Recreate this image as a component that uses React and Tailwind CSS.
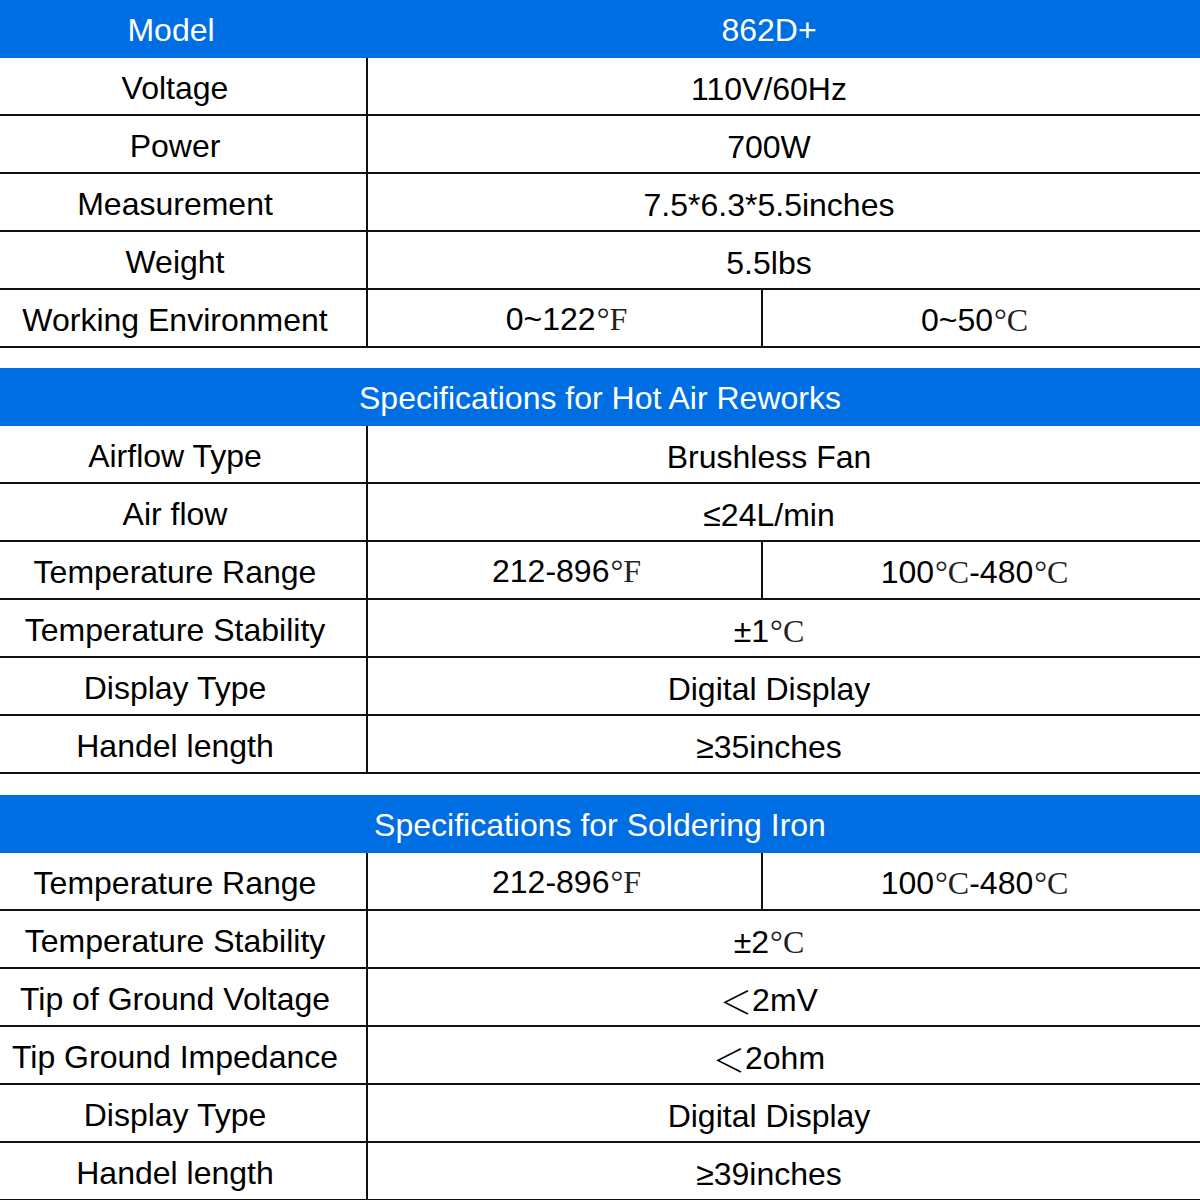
import React from "react";

// unit marks are set in a serif face, like the original chart
const U = ({ children }) => (
  <span className="font-['Liberation_Serif',serif] text-[32px] text-[#222] ml-[1px]">{children}</span>
);
const Lt = () => (
  <span className="font-['Noto_Sans_CJK_SC',sans-serif] font-light">＜</span>
);

const F = () => <U>°F</U>;
const C = () => <U>°C</U>;

const sections = [
  {
    head: ["Model", "862D+"],
    rows: [
      ["Voltage", "110V/60Hz"],
      ["Power", "700W"],
      ["Measurement", "7.5*6.3*5.5inches"],
      ["Weight", "5.5lbs"],
      ["Working Environment", ["0~122", <F key="f" />], ["0~50", <C key="c" />]],
    ],
  },
  {
    head: "Specifications for Hot Air Reworks",
    rows: [
      ["Airflow Type", "Brushless Fan"],
      ["Air flow", "≤24L/min"],
      ["Temperature Range", ["212-896", <F key="f" />], ["100", <C key="c1" />, "-480", <C key="c2" />]],
      ["Temperature Stability", ["±1", <C key="c" />]],
      ["Display Type", "Digital Display"],
      ["Handel length", "≥35inches"],
    ],
  },
  {
    head: "Specifications for Soldering Iron",
    rows: [
      ["Temperature Range", ["212-896", <F key="f" />], ["100", <C key="c1" />, "-480", <C key="c2" />]],
      ["Temperature Stability", ["±2", <C key="c" />]],
      ["Tip of Ground Voltage", [<Lt key="l" />, "2mV"]],
      ["Tip Ground Impedance", [<Lt key="l" />, "2ohm"]],
      ["Display Type", "Digital Display"],
      ["Handel length", "≥39inches"],
    ],
  },
];

const Row = ({ row }) => {
  const [label, a, b] = row;
  return (
    <div className="flex h-[58px] border-b-2 border-[#111]">
      <div className="w-[368px] flex items-center justify-center pr-[16px] pt-[4px] border-r-2 border-[#111]">
        {label}
      </div>
      {b === undefined ? (
        <div className="flex-1 flex items-center justify-center pr-[30px] pt-[6px]">{a}</div>
      ) : (
        <>
          <div className="w-[395px] flex items-center justify-center pl-[4px] pt-[2px] border-r-2 border-[#111]">
            {a}
          </div>
          <div className="flex-1 flex items-center justify-center pr-[14px] pt-[4px]">{b}</div>
        </>
      )}
    </div>
  );
};

export default function App() {
  return (
    <div className="w-[1200px] h-[1200px] bg-white overflow-hidden font-['Liberation_Sans',Arial,sans-serif] text-[32px] text-black leading-none">
      {sections.map((sec, i) => (
        <div key={i} className={i === 0 ? "" : i === 1 ? "mt-[20px]" : "mt-[21px]"}>
          {Array.isArray(sec.head) ? (
            <div className="flex h-[58px] bg-[#006ee3] text-white pt-[2px]">
              <div className="w-[368px] flex items-center justify-center pr-[26px]">{sec.head[0]}</div>
              <div className="flex-1 flex items-center justify-center pr-[30px]">{sec.head[1]}</div>
            </div>
          ) : (
            <div className="flex h-[58px] items-center justify-center bg-[#006ee3] text-white pt-[2px]">
              {sec.head}
            </div>
          )}
          {sec.rows.map((r, j) => (
            <Row key={j} row={r} />
          ))}
        </div>
      ))}
    </div>
  );
}
